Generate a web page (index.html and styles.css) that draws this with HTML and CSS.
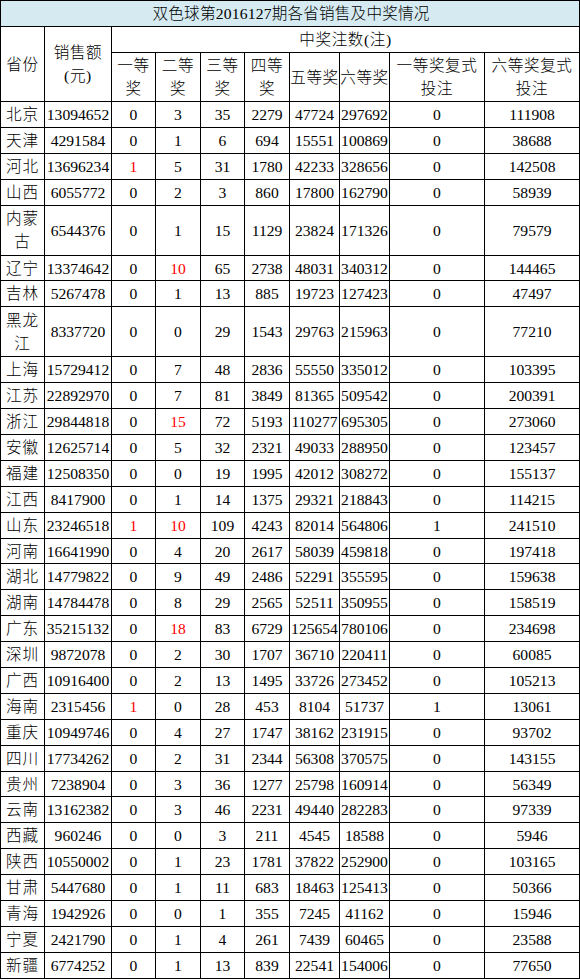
FILE: index.html
```html
<!DOCTYPE html>
<html lang="zh-CN">
<head>
<meta charset="utf-8">
<title>双色球第2016127期各省销售及中奖情况</title>
<link rel="stylesheet" href="styles.css">
</head>
<body>
<table class="sales">
  <colgroup>
    <col class="c-prov"><col class="c-sales"><col class="c-n1"><col class="c-n2"><col class="c-n3"><col class="c-n4"><col class="c-n5"><col class="c-n6"><col class="c-m1"><col class="c-m6">
  </colgroup>
  <thead>
    <tr class="r-title"><th colspan="10" class="title">双色球第2016127期各省销售及中奖情况</th></tr>
    <tr class="r-h1">
      <th rowspan="2">省份</th>
      <th rowspan="2">销售额<br>(元)</th>
      <th colspan="8">中奖注数(注)</th>
    </tr>
    <tr class="r-h2">
      <th>一等<br>奖</th><th>二等<br>奖</th><th>三等<br>奖</th><th>四等<br>奖</th><th>五等奖</th><th>六等奖</th><th>一等奖复式<br>投注</th><th>六等奖复式<br>投注</th>
    </tr>
  </thead>
  <tbody>
    <tr><td>北京</td><td>13094652</td><td>0</td><td>3</td><td>35</td><td>2279</td><td>47724</td><td>297692</td><td>0</td><td>111908</td></tr>
    <tr><td>天津</td><td>4291584</td><td>0</td><td>1</td><td>6</td><td>694</td><td>15551</td><td>100869</td><td>0</td><td>38688</td></tr>
    <tr><td>河北</td><td>13696234</td><td class="hit">1</td><td>5</td><td>31</td><td>1780</td><td>42233</td><td>328656</td><td>0</td><td>142508</td></tr>
    <tr><td>山西</td><td>6055772</td><td>0</td><td>2</td><td>3</td><td>860</td><td>17800</td><td>162790</td><td>0</td><td>58939</td></tr>
    <tr class="tall"><td>内蒙<br>古</td><td>6544376</td><td>0</td><td>1</td><td>15</td><td>1129</td><td>23824</td><td>171326</td><td>0</td><td>79579</td></tr>
    <tr><td>辽宁</td><td>13374642</td><td>0</td><td class="hit">10</td><td>65</td><td>2738</td><td>48031</td><td>340312</td><td>0</td><td>144465</td></tr>
    <tr><td>吉林</td><td>5267478</td><td>0</td><td>1</td><td>13</td><td>885</td><td>19723</td><td>127423</td><td>0</td><td>47497</td></tr>
    <tr class="tall"><td>黑龙<br>江</td><td>8337720</td><td>0</td><td>0</td><td>29</td><td>1543</td><td>29763</td><td>215963</td><td>0</td><td>77210</td></tr>
    <tr><td>上海</td><td>15729412</td><td>0</td><td>7</td><td>48</td><td>2836</td><td>55550</td><td>335012</td><td>0</td><td>103395</td></tr>
    <tr><td>江苏</td><td>22892970</td><td>0</td><td>7</td><td>81</td><td>3849</td><td>81365</td><td>509542</td><td>0</td><td>200391</td></tr>
    <tr><td>浙江</td><td>29844818</td><td>0</td><td class="hit">15</td><td>72</td><td>5193</td><td>110277</td><td>695305</td><td>0</td><td>273060</td></tr>
    <tr><td>安徽</td><td>12625714</td><td>0</td><td>5</td><td>32</td><td>2321</td><td>49033</td><td>288950</td><td>0</td><td>123457</td></tr>
    <tr><td>福建</td><td>12508350</td><td>0</td><td>0</td><td>19</td><td>1995</td><td>42012</td><td>308272</td><td>0</td><td>155137</td></tr>
    <tr><td>江西</td><td>8417900</td><td>0</td><td>1</td><td>14</td><td>1375</td><td>29321</td><td>218843</td><td>0</td><td>114215</td></tr>
    <tr><td>山东</td><td>23246518</td><td class="hit">1</td><td class="hit">10</td><td>109</td><td>4243</td><td>82014</td><td>564806</td><td>1</td><td>241510</td></tr>
    <tr><td>河南</td><td>16641990</td><td>0</td><td>4</td><td>20</td><td>2617</td><td>58039</td><td>459818</td><td>0</td><td>197418</td></tr>
    <tr><td>湖北</td><td>14779822</td><td>0</td><td>9</td><td>49</td><td>2486</td><td>52291</td><td>355595</td><td>0</td><td>159638</td></tr>
    <tr><td>湖南</td><td>14784478</td><td>0</td><td>8</td><td>29</td><td>2565</td><td>52511</td><td>350955</td><td>0</td><td>158519</td></tr>
    <tr><td>广东</td><td>35215132</td><td>0</td><td class="hit">18</td><td>83</td><td>6729</td><td>125654</td><td>780106</td><td>0</td><td>234698</td></tr>
    <tr><td>深圳</td><td>9872078</td><td>0</td><td>2</td><td>30</td><td>1707</td><td>36710</td><td>220411</td><td>0</td><td>60085</td></tr>
    <tr><td>广西</td><td>10916400</td><td>0</td><td>2</td><td>13</td><td>1495</td><td>33726</td><td>273452</td><td>0</td><td>105213</td></tr>
    <tr><td>海南</td><td>2315456</td><td class="hit">1</td><td>0</td><td>28</td><td>453</td><td>8104</td><td>51737</td><td>1</td><td>13061</td></tr>
    <tr><td>重庆</td><td>10949746</td><td>0</td><td>4</td><td>27</td><td>1747</td><td>38162</td><td>231915</td><td>0</td><td>93702</td></tr>
    <tr><td>四川</td><td>17734262</td><td>0</td><td>2</td><td>31</td><td>2344</td><td>56308</td><td>370575</td><td>0</td><td>143155</td></tr>
    <tr><td>贵州</td><td>7238904</td><td>0</td><td>3</td><td>36</td><td>1277</td><td>25798</td><td>160914</td><td>0</td><td>56349</td></tr>
    <tr><td>云南</td><td>13162382</td><td>0</td><td>3</td><td>46</td><td>2231</td><td>49440</td><td>282283</td><td>0</td><td>97339</td></tr>
    <tr><td>西藏</td><td>960246</td><td>0</td><td>0</td><td>3</td><td>211</td><td>4545</td><td>18588</td><td>0</td><td>5946</td></tr>
    <tr><td>陕西</td><td>10550002</td><td>0</td><td>1</td><td>23</td><td>1781</td><td>37822</td><td>252900</td><td>0</td><td>103165</td></tr>
    <tr><td>甘肃</td><td>5447680</td><td>0</td><td>1</td><td>11</td><td>683</td><td>18463</td><td>125413</td><td>0</td><td>50366</td></tr>
    <tr><td>青海</td><td>1942926</td><td>0</td><td>0</td><td>1</td><td>355</td><td>7245</td><td>41162</td><td>0</td><td>15946</td></tr>
    <tr><td>宁夏</td><td>2421790</td><td>0</td><td>1</td><td>4</td><td>261</td><td>7439</td><td>60465</td><td>0</td><td>23588</td></tr>
    <tr><td>新疆</td><td>6774252</td><td>0</td><td>1</td><td>13</td><td>839</td><td>22541</td><td>154006</td><td>0</td><td>77650</td></tr>
  </tbody>
</table>
</body>
</html>
```
FILE: styles.css
```css
html, body {
  margin: 0;
  padding: 0;
  background: #ffffff;
}

.sales {
  border-collapse: collapse;
  table-layout: fixed;
  width: 579px;
  font-family: "Liberation Serif", "Noto Sans CJK SC", serif;
  font-size: 15.6px;
  font-weight: 300;
  color: #000000;
}

.c-prov { width: 44px; }
.c-sales { width: 67px; }
.c-n1 { width: 44px; }
.c-n2 { width: 45px; }
.c-n3 { width: 44px; }
.c-n4 { width: 45px; }
.c-n5 { width: 50px; }
.c-n6 { width: 50px; }
.c-m1 { width: 95px; }
.c-m6 { width: 95px; }

.sales th,
.sales td {
  border: 1px solid #000000;
  padding: 0;
  text-align: center;
  vertical-align: middle;
  font-weight: 300;
  line-height: 23px;
  white-space: nowrap;
  overflow: visible;
}

.sales th {
  letter-spacing: 0.6px;
}

.sales .title {
  background: #d6ebf1;
  font-size: 15.6px;
  letter-spacing: 0.2px;
  padding-left: 2px;
}

.r-title { height: 26px; }
.r-h1 { height: 26px; }
.r-h2 { height: 49px; }
.sales tbody tr { height: 25.9px; }
.sales tbody tr.tall { height: 50px; }

.sales td:first-child {
  letter-spacing: 0.8px;
}

.hit {
  color: #ff0000;
}
```
